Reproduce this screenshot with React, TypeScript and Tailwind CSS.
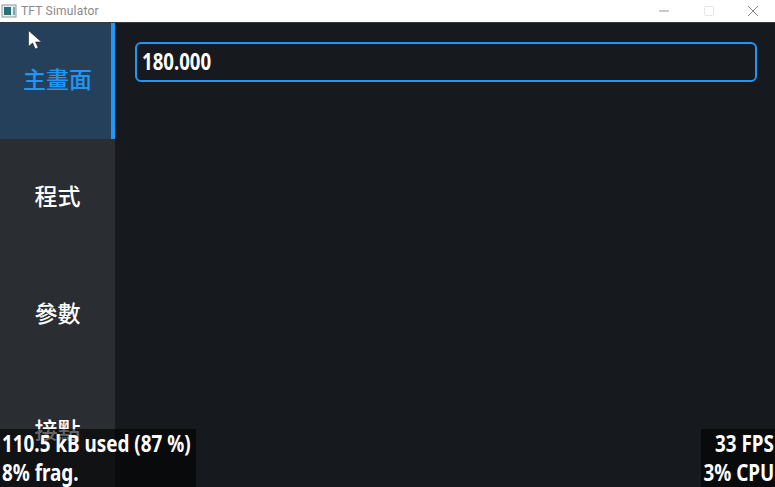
import React from "react";

const font = { fontFamily: '"Noto Sans", "Noto Sans CJK TC", sans-serif' };

function Tab({ label, active }: { label: string; active?: boolean }) {
  return (
    <div
      className={
        active
          ? "h-[116px] shrink-0 flex items-center justify-center bg-[#24405b] border-r-[4px] border-[#2196f3] text-[#2196f3] text-[23px] font-medium pb-[3px] pl-[4px]"
          : "h-[117px] shrink-0 flex items-center justify-center text-white text-[23px] font-medium pb-[3px]"
      }
    >
      <span>{label}</span>
    </div>
  );
}

export default function App() {
  return (
    <div className="relative w-[775px] h-[487px] overflow-hidden flex flex-col bg-[#16191d]" style={font}>
      <div className="h-[23px] shrink-0 bg-white border-b border-[#3a3a3a] flex items-center">
        <svg width="16" height="14" viewBox="0 0 16 14" className="ml-[1px]">
          <rect x="1" y="1" width="14" height="12" fill="#e8efee" stroke="#8a9a9c" />
          <rect x="3" y="3" width="7" height="8" fill="#2b6f78" />
          <rect x="12" y="3" width="2" height="8" fill="#7fa5a8" />
        </svg>
        <span className="ml-[4px] text-[12px] text-[#8a8a8a] tracking-[0.2px]" style={{ fontFamily: '"Roboto", sans-serif' }}>
          TFT Simulator
        </span>
        <div className="ml-auto flex items-center">
          <svg width="12" height="12" viewBox="0 0 12 12" className="mr-[33px]">
            <path d="M1 6H11" stroke="#999" strokeWidth="1" />
          </svg>
          <svg width="12" height="12" viewBox="0 0 12 12" className="mr-[32px]">
            <rect x="1.5" y="1.5" width="9" height="9" rx="1" fill="none" stroke="#e6e6e6" />
          </svg>
          <svg width="12" height="12" viewBox="0 0 12 12" className="mr-[16px]">
            <path d="M1 1L11 11M11 1L1 11" stroke="#888" strokeWidth="1" />
          </svg>
        </div>
      </div>
      <div className="flex flex-1 min-h-0">
        <div className="w-[115px] shrink-0 flex flex-col bg-[#2a2d32]">
          <Tab label="主畫面" active />
          <Tab label="程式" />
          <Tab label="參數" />
          <Tab label="接點" />
        </div>
        <div className="flex-1 pl-[20px] pr-[18px] pt-[19px]">
          <div className="h-[40px] rounded-[6px] border-2 border-[#2196f3] bg-[#16191d] flex items-center pl-[5px] pb-[2px] text-white text-[23px] font-bold">
            <span className="inline-block origin-left scale-x-[0.81]">180.000</span>
          </div>
        </div>
      </div>

      {/* cursor */}
      <svg width="15" height="20" viewBox="0 0 15 20" className="absolute left-[28px] top-[30px]">
        <path d="M0.5 0.5V16.5L4.6 13L7.2 19L10.2 17.7L7.6 12H13.5Z" fill="#fff" stroke="#222" strokeWidth="0.6" />
      </svg>

      <div className="absolute left-0 bottom-0 w-[196px] h-[58px] bg-[#000000]/60 text-white text-[23px] font-bold leading-[29px] pl-[2px] whitespace-nowrap flex flex-col items-start">
        <div className="origin-left scale-x-[0.82]">110.5 kB used (87 %)</div>
        <div className="origin-left scale-x-[0.82]">8% frag.</div>
      </div>
      <div className="absolute right-0 bottom-0 w-[74px] h-[58px] bg-[#000000]/60 text-white text-[23px] font-bold leading-[29px] pr-[1px] whitespace-nowrap flex flex-col items-end">
        <div className="origin-right scale-x-[0.82]">33 FPS</div>
        <div className="origin-right scale-x-[0.82]">3% CPU</div>
      </div>
    </div>
  );
}
